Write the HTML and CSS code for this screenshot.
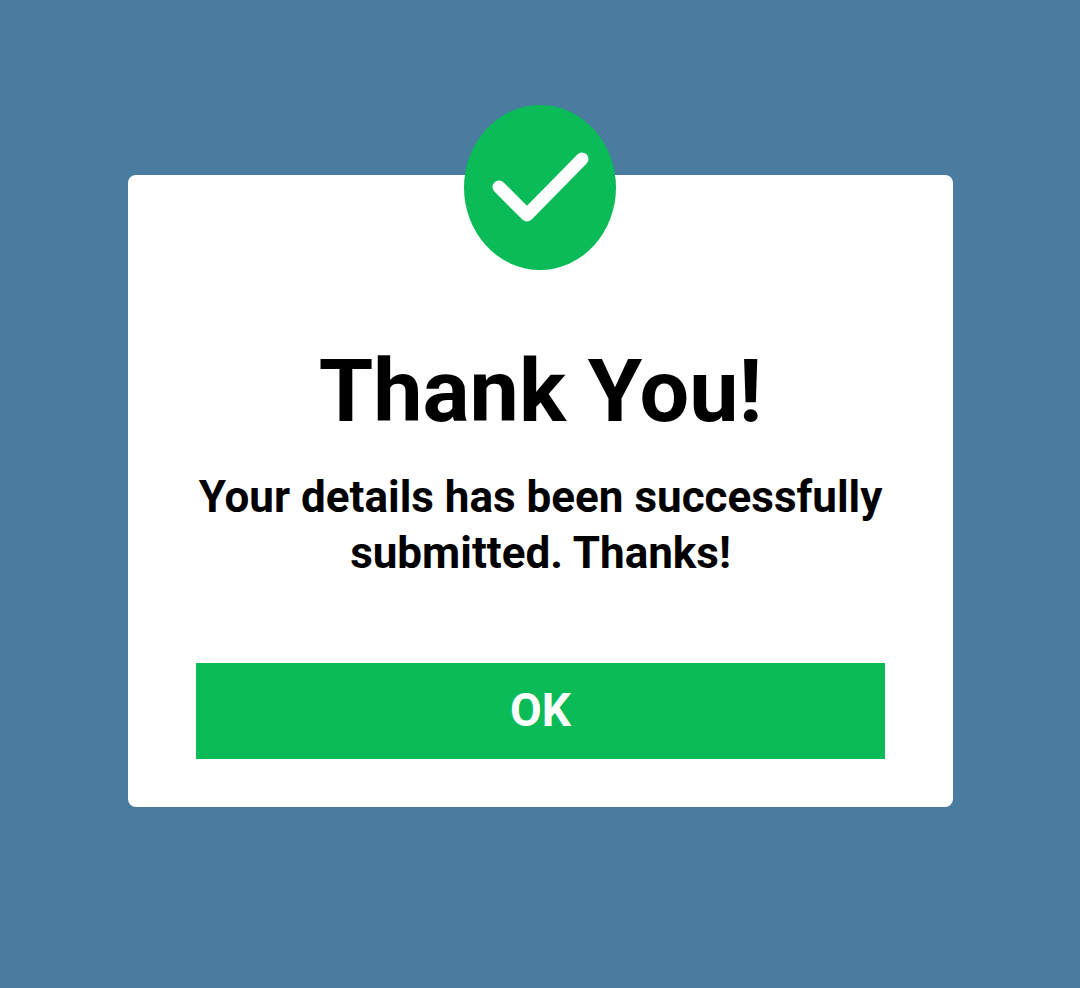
FILE: index.html
```html
<!DOCTYPE html>
<html lang="en">
<head>
  <meta charset="UTF-8">
  <meta name="viewport" content="width=device-width, initial-scale=1.0">
  <title>Thank You</title>
  <link rel="stylesheet" href="styles.css">
</head>
<body>
  <div class="modal">
    <div class="modal-icon">
      <svg viewBox="0 0 152 165" width="152" height="165">
        <path d="M35 82 L63 110 L118 54" fill="none" stroke="#fff" stroke-width="13" stroke-linecap="round" stroke-linejoin="round"/>
      </svg>
    </div>
    <h1>Thank You!</h1>
    <p>Your details has been successfully submitted. Thanks!</p>
    <button type="button">OK</button>
  </div>
</body>
</html>
```

FILE: styles.css
```css
body {
  font-family: Roboto, Arial, sans-serif;
  margin: 0;
  padding: 0;
  height: 988px;
  background-color: #4a7c9f;
  display: flex;
  justify-content: center;
  align-items: flex-start;
}
.modal {
  position: relative;
  box-sizing: border-box;
  width: 825px;
  height: 632px;
  margin-top: 175px;
  margin-left: 1px;
  padding: 171px 68px 0;
  background: #fff;
  border-radius: 8px;
  text-align: center;
}
.modal-icon {
  position: absolute;
  top: -70px;
  left: 336px;
  width: 152px;
  height: 165px;
  background: #0abb57;
  border-radius: 50%;
}
.modal-icon svg {
  display: block;
}
.modal h1 {
  margin: 0;
  font-size: 88px;
  line-height: 90px;
  font-weight: 700;
  color: #000;
}
.modal p {
  margin: 33px -2px 0;
  font-size: 44px;
  line-height: 56px;
  font-weight: 700;
  color: #000;
}
.modal button {
  display: block;
  width: 100%;
  height: 96px;
  margin-top: 82px;
  padding: 0 0 2px;
  background-color: #0abb57;
  color: #fff;
  border: none;
  font-family: inherit;
  font-size: 46px;
  font-weight: 700;
}
```
